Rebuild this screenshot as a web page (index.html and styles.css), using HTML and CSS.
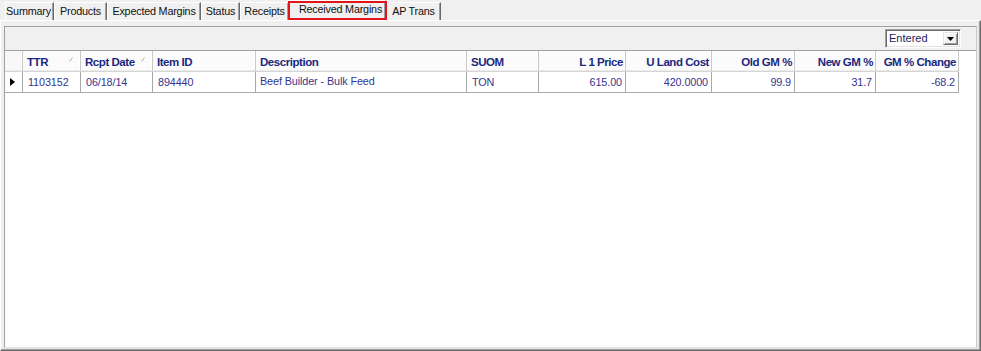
FILE: index.html
```html
<!DOCTYPE html>
<html>
<head>
<meta charset="utf-8">
<link rel="stylesheet" href="styles.css">
</head>
<body>
<div class="window">
  <div class="tabs">
    <div class="tab w-summary">Summary</div>
    <div class="tab w-products">Products</div>
    <div class="tab w-expected">Expected Margins</div>
    <div class="tab w-status">Status</div>
    <div class="tab w-receipts">Receipts</div>
    <div class="tab tab-selected">Received Margins</div>
    <div class="tab w-ap">AP Trans</div>
  </div>
  <div class="tabpage">
    <div class="grid">
      <div class="grouppanel">
        <div class="combo">
          <span class="combo-text">Entered</span>
          <span class="combo-btn"><svg width="7" height="4" viewBox="0 0 7 4"><path d="M0 0H7L3.5 4Z" fill="#000"/></svg></span>
        </div>
      </div>
      <div class="row head">
        <div class="cell sel"></div>
        <div class="cell">TTR<svg class="sort" width="4" height="5" viewBox="0 0 4 5"><path d="M0.5 4.5L3.5 0.5" stroke="#b0b0b0" stroke-width="1"/></svg></div>
        <div class="cell">Rcpt Date<svg class="sort" width="4" height="5" viewBox="0 0 4 5"><path d="M0.5 4.5L3.5 0.5" stroke="#b0b0b0" stroke-width="1"/></svg></div>
        <div class="cell">Item ID</div>
        <div class="cell">Description</div>
        <div class="cell">SUOM</div>
        <div class="cell num">L 1 Price</div>
        <div class="cell num">U Land Cost</div>
        <div class="cell num">Old GM %</div>
        <div class="cell num">New GM %</div>
        <div class="cell num">GM % Change</div>
      </div>
      <div class="row data">
        <div class="cell sel"><svg width="5" height="8" viewBox="0 0 5 8"><path d="M0 0L5 4L0 8Z" fill="#000"/></svg></div>
        <div class="cell">1103152</div>
        <div class="cell">06/18/14</div>
        <div class="cell">894440</div>
        <div class="cell desc">Beef Builder - Bulk Feed</div>
        <div class="cell">TON</div>
        <div class="cell num">615.00</div>
        <div class="cell num">420.0000</div>
        <div class="cell num">99.9</div>
        <div class="cell num">31.7</div>
        <div class="cell num">-68.2</div>
      </div>
    </div>
  </div>
</div>
</body>
</html>
```

FILE: styles.css
```css
html, body {
  margin: 0;
  padding: 0;
}
body {
  width: 981px;
  height: 351px;
  overflow: hidden;
  background: #f0f0f0;
  font-family: "Liberation Sans", Arial, sans-serif;
}
.window {
  display: flex;
  flex-direction: column;
  width: 981px;
  height: 351px;
}
.tabs {
  display: flex;
  align-items: flex-end;
  height: 20px;
  padding-left: 5px;
  box-sizing: border-box;
}
.tab {
  box-sizing: border-box;
  height: 18px;
  border-left: 1px solid #ffffff;
  border-top: 1px solid #ffffff;
  border-right: 1px solid #696969;
  box-shadow: inset -1px 0 #a0a0a0;
  font-size: 10.8px;
  letter-spacing: -0.2px;
  line-height: 17px;
  color: #111;
  text-align: center;
  white-space: nowrap;
  overflow: hidden;
}
.w-summary { width: 49px; padding-right: 2px; }
.w-products { width: 53px; }
.w-expected { width: 94px; }
.w-status { width: 39px; }
.w-receipts { width: 49px; }
.w-ap { width: 55px; }
.tab-selected {
  position: relative;
  overflow: visible;
  width: 97px;
  height: 20px;
  align-self: flex-start;
  line-height: 16px;
  padding-left: 6px;
  background: #f0f0f0;
  z-index: 1;
}
.tab-selected::after {
  content: "";
  position: absolute;
  left: -2px;
  top: 0;
  width: 99px;
  height: 19px;
  box-sizing: border-box;
  border: 2px solid #e3151c;
}
.tabpage {
  flex: 1;
  box-sizing: border-box;
  border-top: 1px solid #ffffff;
  border-left: 1px solid #ffffff;
  border-right: 1px solid #696969;
  border-bottom: 1px solid #696969;
  box-shadow: inset -1px -1px #a0a0a0, inset -2px -2px #e3e3e3;
  padding: 5px 3px 2px 3px;
  display: flex;
}
.grid {
  flex: 1;
  background: #ffffff;
  border: 1px solid #a0a0a0;
  border-right-color: #c8c8c8;
  border-bottom-color: #e3e3e3;
  display: flex;
  flex-direction: column;
}
.grouppanel {
  background: #f0f0f0;
  border-bottom: 1px solid #a0a0a0;
  display: flex;
  justify-content: flex-end;
  align-items: flex-start;
  padding-top: 2px;
  padding-right: 15px;
  height: 21px;
}
.combo {
  width: 76px;
  height: 19px;
  box-sizing: border-box;
  background: #ffffff;
  border-top: 1px solid #a0a0a0;
  border-left: 1px solid #a0a0a0;
  border-right: 1px solid #ffffff;
  border-bottom: 1px solid #ffffff;
  box-shadow: inset 1px 1px #696969, inset -1px -1px #e3e3e3;
  display: flex;
  align-items: center;
  justify-content: space-between;
  padding: 0 2px 0 3px;
}
.combo-text {
  font-size: 11px;
  color: #1c1c5c;
  line-height: 15px;
}
.combo-btn {
  width: 15px;
  height: 13px;
  box-sizing: border-box;
  background: #f0f0f0;
  border-top: 1px solid #e3e3e3;
  border-left: 1px solid #e3e3e3;
  border-right: 1px solid #696969;
  border-bottom: 1px solid #696969;
  box-shadow: inset 1px 1px #ffffff, inset -1px -1px #a0a0a0;
  display: flex;
  align-items: center;
  justify-content: center;
}
.row {
  display: grid;
  grid-template-columns: 18px 58px 72px 103px 211px 72px 87px 86px 83px 81px 83px;
}
.cell {
  box-sizing: border-box;
  border-right: 1px solid #c8c8c8;
  white-space: nowrap;
  overflow: hidden;
  display: flex;
  align-items: center;
  padding: 0 3px 0 4px;
}
.cell.num {
  justify-content: flex-end;
  padding: 0 2px 0 2px;
}
.head .cell {
  height: 21px;
  border-bottom: 1px solid #d5d5d5;
  background: #fbfbfb;
  box-shadow: inset 0 -1px #ececec, inset -1px 0 #ffffff;
  font-size: 11.5px;
  font-weight: bold;
  letter-spacing: -0.45px;
  color: #1a2880;
  padding-top: 1px;
  position: relative;
}
.head .cell.sel {
  background: #f8f8f8;
}
.sort {
  position: absolute;
  right: 7px;
  top: 6px;
}
.data .cell {
  height: 21px;
  border-right-color: #a8a8a8;
  border-bottom: 1px solid #a8a8a8;
  font-size: 10.8px;
  letter-spacing: -0.1px;
  color: #35358f;
  padding-left: 5px;
}
.data .cell.num {
  padding-left: 2px;
  padding-right: 3px;
}
.data .cell.desc {
  align-items: flex-start;
  padding-top: 3px;
  padding-left: 4px;
}
.data .cell.sel {
  padding-left: 5px;
}
```
